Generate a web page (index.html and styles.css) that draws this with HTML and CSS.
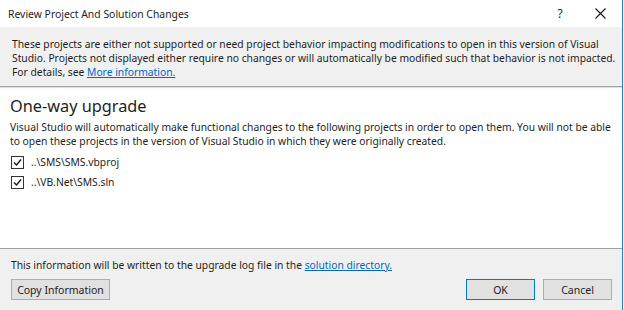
FILE: index.html
```html
<!DOCTYPE html>
<html lang="en">

<head>
    <meta charset="UTF-8">
    <meta name="viewport" content="width=device-width, initial-scale=1.0">
    <title>Review Project And Solution Changes</title>
    <link rel="stylesheet" href="styles.css">
</head>

<body>
    <div class="window">
        <div class="titlebar">
            <span class="title">Review Project And Solution Changes</span>
            <span class="help">?</span>
            <span class="close">
                <svg width="11" height="11" viewBox="0 0 11 11">
                    <path d="M0.5 0.5 L10.5 10.5 M10.5 0.5 L0.5 10.5" stroke="#1a1a1a" stroke-width="1.1" fill="none"/>
                </svg>
            </span>
        </div>

        <div class="info">
            These projects are either not supported or need project behavior impacting modifications to open in this version of Visual<br>
            Studio. Projects not displayed either require no changes or will automatically be modified such that behavior is not impacted.<br>
            For details, see <a href="#">More information.</a>
        </div>

        <main class="content">
            <h2>One-way upgrade</h2>
            <p>Visual Studio will automatically make functional changes to the following projects in order to open them. You will not be able<br>
                to open these projects in the version of Visual Studio in which they were originally created.</p>
            <ul class="projects">
                <li>
                    <span class="check">
                        <svg width="9" height="9" viewBox="0 0 9 9"><path d="M1 4.5 L3.5 7 L8 1.5" stroke="#1a1a1a" stroke-width="1.4" fill="none"/></svg>
                    </span>
                    ..\SMS\SMS.vbproj
                </li>
                <li>
                    <span class="check">
                        <svg width="9" height="9" viewBox="0 0 9 9"><path d="M1 4.5 L3.5 7 L8 1.5" stroke="#1a1a1a" stroke-width="1.4" fill="none"/></svg>
                    </span>
                    ..\VB.Net\SMS.sln
                </li>
            </ul>
        </main>

        <footer class="footer">
            <div class="note">This information will be written to the upgrade log file in the <a href="#">solution directory.</a></div>
            <div class="buttons">
                <button class="btn copy">Copy Information</button>
                <span class="spacer"></span>
                <button class="btn default">OK</button>
                <button class="btn">Cancel</button>
            </div>
        </footer>
    </div>
</body>

</html>
```

FILE: styles.css
```css
body {
    margin: 0;
    font-family: "Noto Sans", "Open Sans", sans-serif;
    font-size: 10.3px;
    color: #1e1e1e;
}

.window {
    width: 622px;
    height: 310px;
    border-right: 1px solid #2b79d0;
    display: flex;
    flex-direction: column;
    background-color: #fff;
}

.titlebar {
    height: 27px;
    display: flex;
    align-items: center;
    padding-left: 8px;
    flex-shrink: 0;
}

.title {
    flex: 1;
    font-size: 10.4px;
}

.help {
    width: 40px;
    text-align: center;
    font-size: 12px;
}

.close {
    width: 40px;
    display: flex;
    justify-content: center;
    margin-right: 2px;
}

.info {
    height: 60px;
    box-sizing: border-box;
    background-color: #f0f0f0;
    border-bottom: 1px solid #a0a0a0;
    box-shadow: 0 1px 1px rgba(0, 0, 0, 0.12);
    padding: 10px 12px 0;
    line-height: 14px;
    white-space: nowrap;
    flex-shrink: 0;
}

a {
    color: #0066cc;
}

.content {
    flex: 1;
    padding: 9px 10px 0;
}

h2 {
    font-size: 16.3px;
    font-weight: normal;
    margin: 0 0 4px;
    line-height: 20px;
}

p {
    margin: 0 0 4px;
    line-height: 14px;
    white-space: nowrap;
}

.projects {
    list-style: none;
    margin: 0;
    padding: 0;
}

.projects li {
    display: flex;
    align-items: center;
    height: 20px;
}

.check {
    width: 11px;
    height: 11px;
    border: 1px solid #333;
    margin: 0 7px 0 1px;
    display: flex;
    align-items: center;
    justify-content: center;
}

.footer {
    height: 62px;
    box-sizing: border-box;
    background-color: #f0f0f0;
    border-top: 1px solid #a0a0a0;
    padding: 9px 10px 0 11px;
    flex-shrink: 0;
}

.note {
    line-height: 14px;
}

.buttons {
    display: flex;
    margin-top: 7px;
    gap: 8px;
}

.spacer {
    flex: 1;
}

.btn {
    font-family: inherit;
    font-size: 10.5px;
    color: #1e1e1e;
    height: 21px;
    width: 69px;
    padding: 0;
    background-color: #e1e1e1;
    border: 1px solid #adadad;
}

.btn.copy {
    width: 99px;
}

.btn.default {
    border-color: #0078d7;
}
```
